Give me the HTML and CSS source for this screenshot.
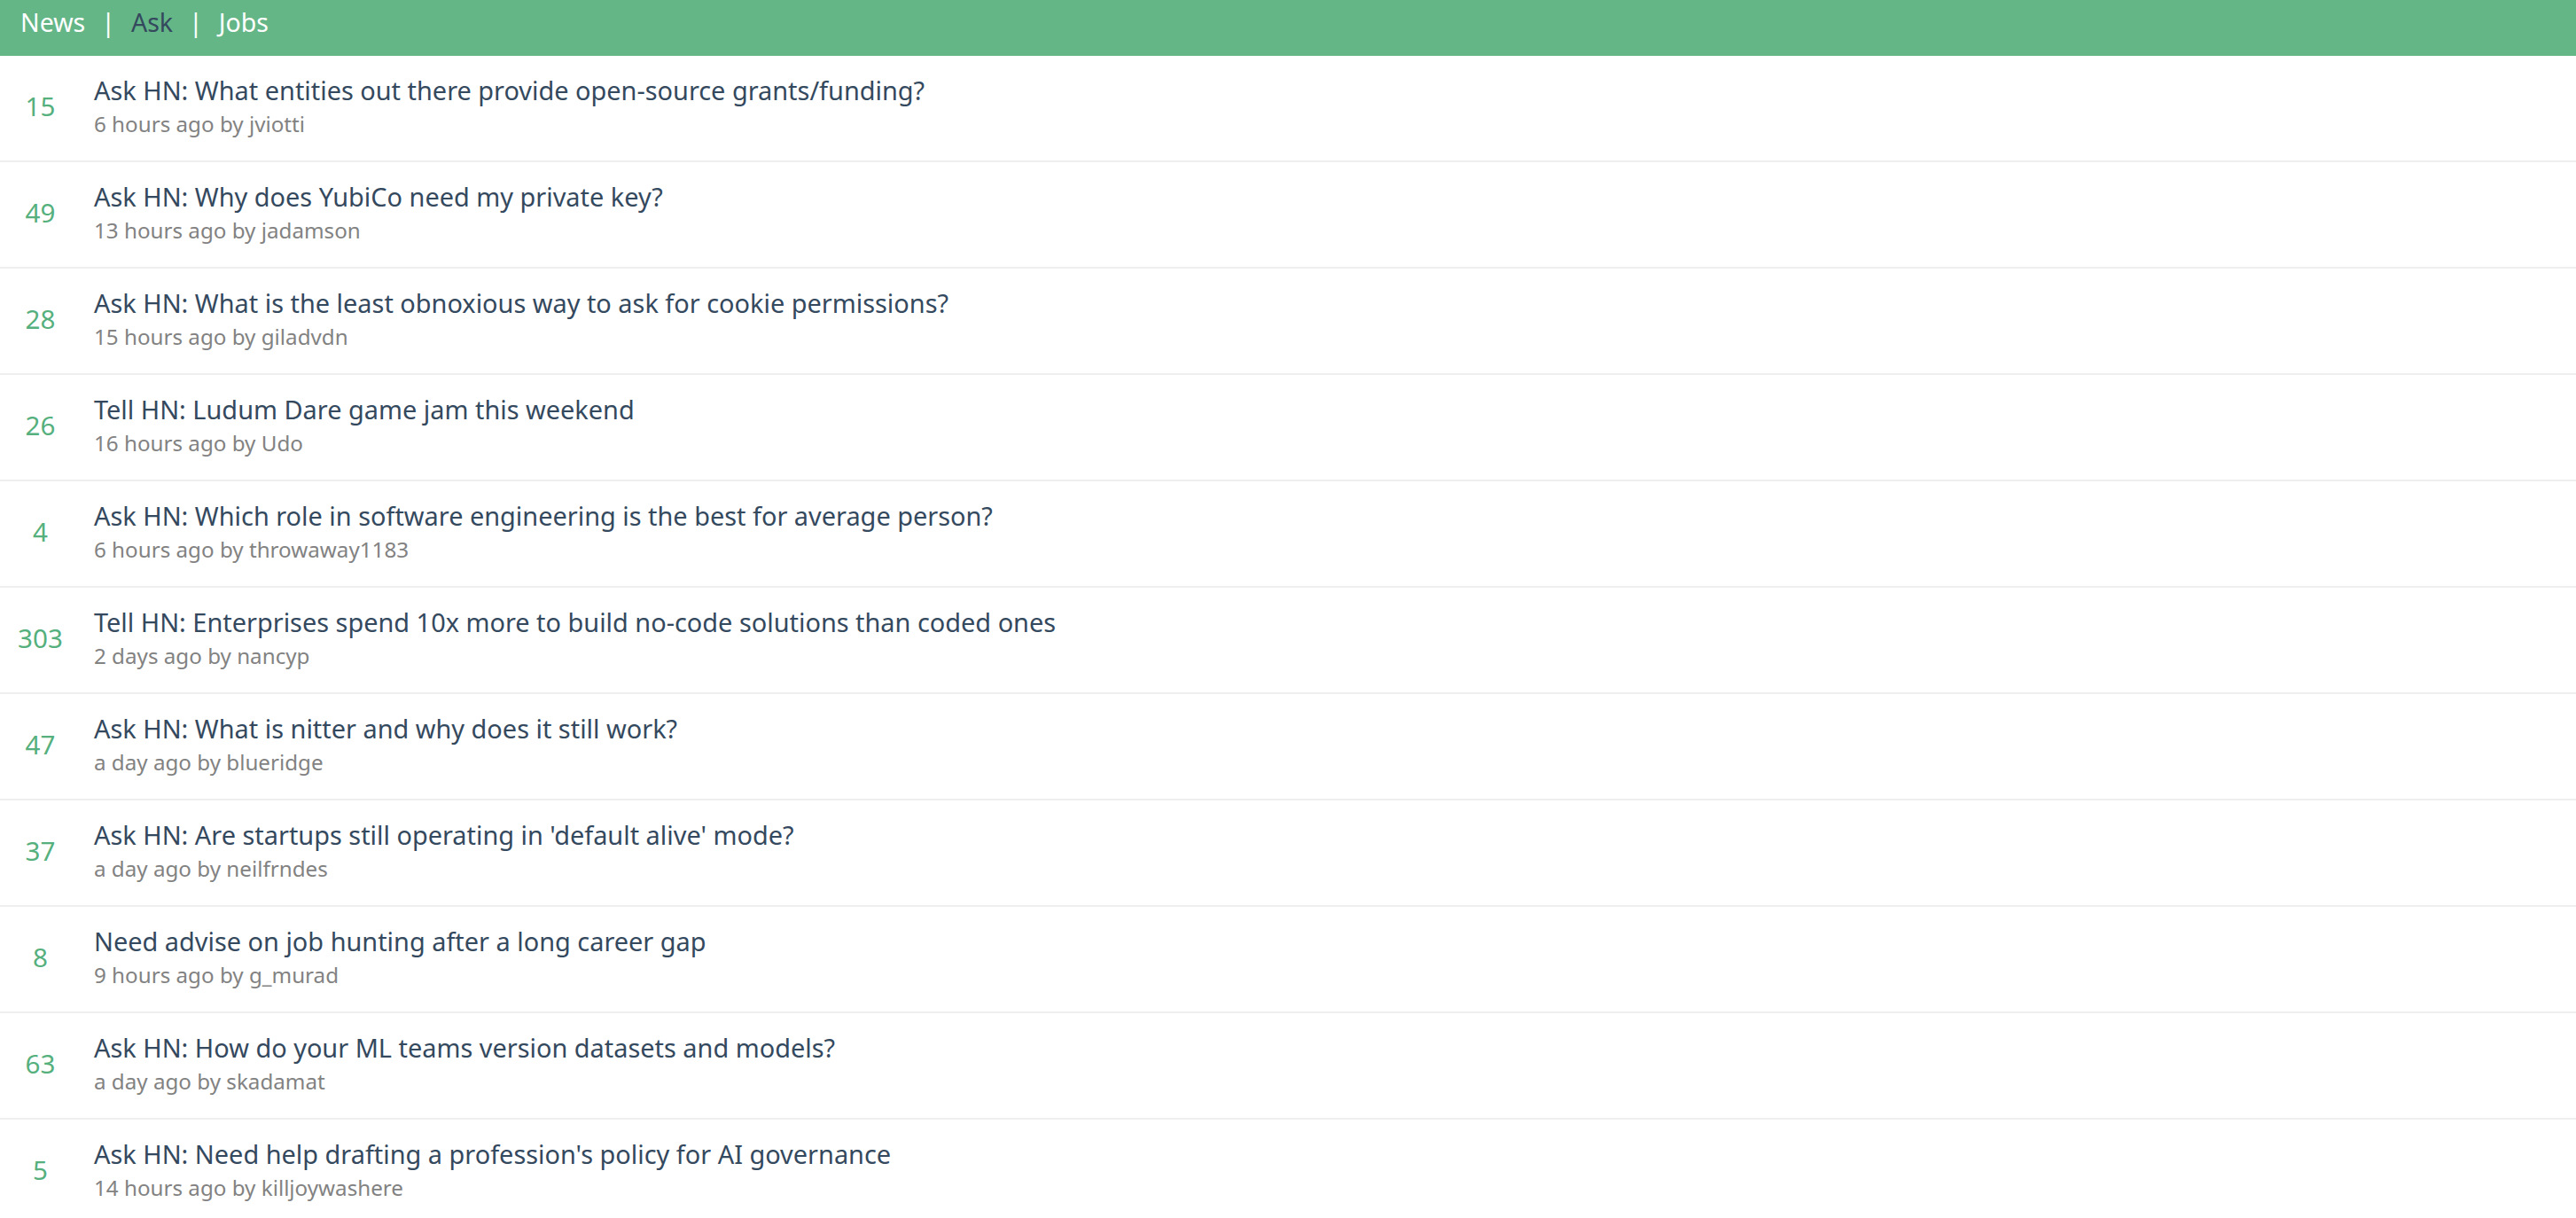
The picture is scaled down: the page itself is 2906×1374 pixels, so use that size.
FILE: index.html
```html
<!DOCTYPE html>
<html lang="en">
<head>
  <meta charset="UTF-8">
  <meta name="viewport" content="width=device-width, initial-scale=1.0">
  <title>Ask</title>
  <link rel="stylesheet" href="styles.css">
</head>
<body>
  <div class="header">
    <a class="nav-link" href="#">News</a>
    <span class="sep">|</span>
    <a class="nav-link active" href="#">Ask</a>
    <span class="sep">|</span>
    <a class="nav-link" href="#">Jobs</a>
  </div>

  <ul class="list">
    <li class="item">
      <div class="score">15</div>
      <div class="info">
        <div class="title">Ask HN: What entities out there provide open-source grants/funding?</div>
        <div class="meta">6 hours ago by jviotti</div>
      </div>
    </li>
    <li class="item">
      <div class="score">49</div>
      <div class="info">
        <div class="title">Ask HN: Why does YubiCo need my private key?</div>
        <div class="meta">13 hours ago by jadamson</div>
      </div>
    </li>
    <li class="item">
      <div class="score">28</div>
      <div class="info">
        <div class="title">Ask HN: What is the least obnoxious way to ask for cookie permissions?</div>
        <div class="meta">15 hours ago by giladvdn</div>
      </div>
    </li>
    <li class="item">
      <div class="score">26</div>
      <div class="info">
        <div class="title">Tell HN: Ludum Dare game jam this weekend</div>
        <div class="meta">16 hours ago by Udo</div>
      </div>
    </li>
    <li class="item">
      <div class="score">4</div>
      <div class="info">
        <div class="title">Ask HN: Which role in software engineering is the best for average person?</div>
        <div class="meta">6 hours ago by throwaway1183</div>
      </div>
    </li>
    <li class="item">
      <div class="score">303</div>
      <div class="info">
        <div class="title">Tell HN: Enterprises spend 10x more to build no-code solutions than coded ones</div>
        <div class="meta">2 days ago by nancyp</div>
      </div>
    </li>
    <li class="item">
      <div class="score">47</div>
      <div class="info">
        <div class="title">Ask HN: What is nitter and why does it still work?</div>
        <div class="meta">a day ago by blueridge</div>
      </div>
    </li>
    <li class="item">
      <div class="score">37</div>
      <div class="info">
        <div class="title">Ask HN: Are startups still operating in 'default alive' mode?</div>
        <div class="meta">a day ago by neilfrndes</div>
      </div>
    </li>
    <li class="item">
      <div class="score">8</div>
      <div class="info">
        <div class="title">Need advise on job hunting after a long career gap</div>
        <div class="meta">9 hours ago by g_murad</div>
      </div>
    </li>
    <li class="item">
      <div class="score">63</div>
      <div class="info">
        <div class="title">Ask HN: How do your ML teams version datasets and models?</div>
        <div class="meta">a day ago by skadamat</div>
      </div>
    </li>
    <li class="item">
      <div class="score">5</div>
      <div class="info">
        <div class="title">Ask HN: Need help drafting a profession's policy for AI governance</div>
        <div class="meta">14 hours ago by killjoywashere</div>
      </div>
    </li>
  </ul>
</body>
</html>
```

FILE: styles.css
```css
body {
  margin: 0;
  font-family: "Noto Sans", "Open Sans", sans-serif;
  background-color: #fff;
  color: #34495e;
}

.header {
  background-color: #64b687;
  height: 63px;
  padding: 0 23px 12px;
  display: flex;
  align-items: center;
  font-size: 28.5px;
  line-height: 1;
  box-sizing: border-box;
}

.nav-link {
  color: #fff;
  text-decoration: none;
}

.nav-link.active {
  color: #34495e;
}

.sep {
  color: #fff;
  margin: 0 18px;
}

.list {
  list-style: none;
  margin: 0;
  padding: 0;
}

.item {
  display: flex;
  align-items: center;
  box-sizing: border-box;
  height: 120px;
  padding-bottom: 5px;
  border-bottom: 2px solid #eee;
}

.score {
  width: 91px;
  text-align: center;
  font-size: 29.6px;
  color: #55b07d;
}

.info {
  margin-left: 15px;
}

.title {
  font-size: 28.9px;
  line-height: 40px;
  color: #34495e;
}

.meta {
  font-size: 24.2px;
  line-height: 36px;
  color: #828282;
}
```
